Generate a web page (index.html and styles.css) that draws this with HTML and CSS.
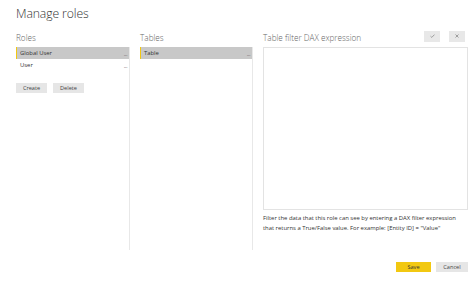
FILE: index.html
```html
<!DOCTYPE html>
<html>
<head>
<meta charset="utf-8">
<link rel="stylesheet" href="styles.css">
</head>
<body>
<div class="dialog">
  <h1 class="title">Manage roles</h1>
  <div class="columns">
    <div class="col col-roles">
      <div class="col-head"><span class="head-text">Roles</span></div>
      <div class="list list-roles">
        <div class="row selected"><span class="row-text">Global User</span><span class="more">...</span></div>
        <div class="row"><span class="row-text">User</span><span class="more">...</span></div>
        <div class="list-actions">
          <button class="btn">Create</button>
          <button class="btn">Delete</button>
        </div>
      </div>
    </div>
    <div class="col col-tables">
      <div class="col-head"><span class="head-text">Tables</span></div>
      <div class="list list-tables">
        <div class="row selected"><span class="row-text">Table</span><span class="more">...</span></div>
      </div>
    </div>
    <div class="col col-dax">
      <div class="col-head dax-head">
        <span class="head-text">Table filter DAX expression</span>
        <div class="head-btns">
          <button class="icon-btn" aria-label="Accept"><svg width="5" height="4" viewBox="0 0 5 4"><path d="M0.5 2.2 L1.8 3.4 L4.5 0.6" fill="none" stroke="#8a8a8a" stroke-width="0.8"/></svg></button>
          <button class="icon-btn" aria-label="Cancel"><svg width="4" height="4" viewBox="0 0 4 4"><path d="M0.5 0.5 L3.5 3.5 M3.5 0.5 L0.5 3.5" fill="none" stroke="#8a8a8a" stroke-width="0.8"/></svg></button>
        </div>
      </div>
      <div class="editor"></div>
      <p class="help">Filter the data that this role can see by entering a DAX filter expression that returns a True/False value. For example: [Entity ID] = "Value"</p>
    </div>
  </div>
  <div class="footer">
    <button class="btn btn-save">Save</button>
    <button class="btn btn-cancel">Cancel</button>
  </div>
</div>
</body>
</html>
```
FILE: styles.css
```css
html, body {
  margin: 0;
  padding: 0;
  background: #ffffff;
}
body {
  font-family: "Open Sans", "Noto Sans", "Liberation Sans", sans-serif;
  color: #333333;
  width: 474px;
  height: 286px;
  overflow: hidden;
}
.dialog {
  padding: 0 6px 0 16px;
}
.title {
  margin: 0;
  padding-top: 5px;
  height: 23px;
  font-size: 12.2px;
  font-weight: 300;
  line-height: 18px;
  color: #333333;
  letter-spacing: -0.1px;
}
.columns {
  display: flex;
}
.col-head {
  height: 19px;
  display: flex;
  align-items: center;
}
.head-text {
  font-size: 8.2px;
  font-weight: 300;
  color: #666666;
  line-height: 12px;
}
.col-roles {
  width: 114px;
}
.col-tables {
  width: 113px;
  padding-left: 10px;
}
.col-dax {
  width: 205px;
  padding-left: 10px;
}
.list {
  height: 203px;
  border-right: 1px solid #e8e8e8;
}
.row {
  height: 12px;
  display: flex;
  align-items: center;
  justify-content: space-between;
  box-sizing: border-box;
  padding: 0 2px 0 3px;
  border-left: 1px solid transparent;
  font-size: 5.9px;
  color: #333333;
}
.row.selected {
  background: #c8c8c8;
  border-left-color: #f2c811;
}
.row-text {
  line-height: 12px;
}
.more {
  font-size: 6px;
  color: #666666;
  letter-spacing: -0.5px;
  line-height: 8px;
  align-self: flex-end;
  padding-bottom: 1px;
}
.list-actions {
  display: flex;
  gap: 6px;
  margin-top: 12px;
}
.btn {
  font-family: "Open Sans", "Noto Sans", "Liberation Sans", sans-serif;
  border: none;
  margin: 0;
  padding: 0;
  background: #e6e6e6;
  color: #444444;
  font-size: 5.6px;
  height: 10px;
  width: 31px;
  line-height: 10px;
  cursor: pointer;
}
.dax-head {
  justify-content: space-between;
}
.head-btns {
  display: flex;
  gap: 9px;
  padding-right: 3px;
  padding-bottom: 3px;
}
.icon-btn {
  border: none;
  margin: 0;
  padding: 0;
  width: 16px;
  height: 11px;
  background: #e8e8e8;
  display: flex;
  align-items: center;
  justify-content: center;
}
.editor {
  height: 161px;
  border: 1px solid #e3e3e3;
}
.help {
  margin: 3px 0 0 0;
  width: 196px;
  font-size: 5.9px;
  line-height: 10px;
  color: #333333;
}
.footer {
  display: flex;
  justify-content: flex-end;
  gap: 5px;
  margin-top: 12px;
}
.btn-save {
  background: #f2c811;
  color: #333333;
  width: 35px;
}
.btn-cancel {
  width: 32px;
}
```
